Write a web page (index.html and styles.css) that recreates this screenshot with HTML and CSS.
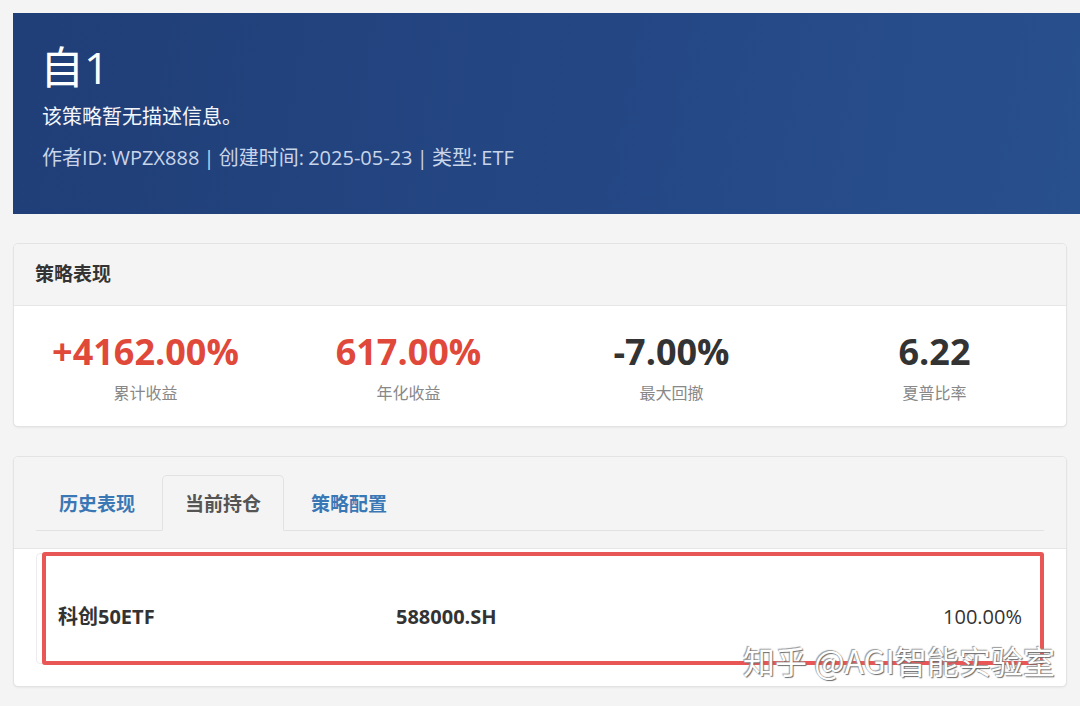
FILE: index.html
```html
<!DOCTYPE html>
<html lang="zh-CN">
<head>
<meta charset="utf-8">
<title>自1</title>
<link rel="stylesheet" href="styles.css">
</head>
<body>
<div class="page">
  <header class="hero">
    <h1 class="hero-title">自1</h1>
    <p class="hero-desc">该策略暂无描述信息。</p>
    <p class="hero-meta">作者ID: WPZX888 | 创建时间: 2025-05-23 | 类型: ETF</p>
  </header>

  <section class="card">
    <div class="card-header perf-header">
      <h2 class="card-title">策略表现</h2>
    </div>
    <div class="stats">
      <div class="stat">
        <div class="stat-value up">+4162.00%</div>
        <div class="stat-label">累计收益</div>
      </div>
      <div class="stat">
        <div class="stat-value up">617.00%</div>
        <div class="stat-label">年化收益</div>
      </div>
      <div class="stat">
        <div class="stat-value">-7.00%</div>
        <div class="stat-label">最大回撤</div>
      </div>
      <div class="stat">
        <div class="stat-value">6.22</div>
        <div class="stat-label">夏普比率</div>
      </div>
    </div>
  </section>

  <section class="card tabs-card">
    <div class="card-header tabs-header">
      <ul class="tabs">
        <li class="tab">历史表现</li>
        <li class="tab active">当前持仓</li>
        <li class="tab">策略配置</li>
      </ul>
    </div>
    <div class="tab-body">
      <div class="holdings">
        <div class="holding-row">
          <span class="h-name">科创50ETF</span>
          <span class="h-code">588000.SH</span>
          <span class="h-weight">100.00%</span>
        </div>
      </div>
      <div class="annotation"></div>
    </div>
    <div class="watermark"><span class="wm-logo"></span>知乎 @AGI智能实验室</div>
  </section>
</div>
</body>
</html>
```

FILE: styles.css
```css
* { box-sizing: border-box; }

html, body {
  margin: 0;
  padding: 0;
  background: #f4f4f4;
  font-family: "Open Sans", "Noto Sans CJK SC", sans-serif;
  color: #333;
  overflow: hidden;
}

.page {
  padding: 13px 13px 20px 13px;
}

.hero {
  margin-right: -13px;
  height: 201px;
  padding: 28px 29px 0 29px;
  background: linear-gradient(100deg, #203e77 0%, #244784 55%, #28508d 100%);
  color: #fff;
}

.hero-title {
  margin: 0;
  font-size: 44px;
  line-height: 52px;
  font-weight: 400;
  margin-left: -2px;
}

.hero-desc {
  margin: 10px 0 0 0;
  font-size: 20px;
  line-height: 28px;
  color: #f4f6fa;
}

.hero-meta {
  margin: 13px 0 0 0;
  font-size: 20px;
  line-height: 28px;
  color: #c9d5ea;
  word-spacing: -1px;
}

.card {
  position: relative;
  margin-top: 29px;
  background: #fff;
  border: 1px solid #e3e3e3;
  border-radius: 5px;
  box-shadow: 0 1px 2px rgba(0, 0, 0, 0.05);
  overflow: hidden;
}

.card-header {
  background: #f4f4f4;
  border-bottom: 1px solid #e6e6e6;
}

.perf-header {
  padding: 0 21px;
}

.card-title {
  margin: 0;
  font-size: 19px;
  line-height: 61px;
  font-weight: 700;
  color: #333;
}

.stats {
  display: grid;
  grid-template-columns: repeat(4, 1fr);
  padding: 23px 0 21px 0;
}

.stat {
  text-align: center;
}

.stat-value {
  font-size: 36px;
  line-height: 46px;
  font-weight: 700;
  color: #333;
}

.stat-value.up {
  color: #e0483a;
}

.stat-label {
  margin-top: 6px;
  font-size: 16px;
  line-height: 24px;
  color: #888;
}

.tabs-card {
  margin-top: 29px;
}

.tabs-header {
  padding: 18px 22px 17px 22px;
}

.tabs {
  display: flex;
  margin: 0;
  padding: 0;
  list-style: none;
  border-bottom: 1px solid #e2e2e2;
  height: 56px;
}

.tab {
  margin-right: 4px;
  margin-bottom: -1px;
  padding: 0 22px;
  font-size: 19px;
  line-height: 56px;
  font-weight: 700;
  color: #3a78b5;
  border: 1px solid transparent;
  border-radius: 5px 5px 0 0;
}

.tab.active {
  color: #555;
  background: #f4f4f4;
  border-color: #e2e2e2;
  border-bottom-color: #f4f4f4;
}

.tab-body {
  position: relative;
  padding: 4px 22px 22px 22px;
}

.holdings {
  border: 1px solid #ececec;
  border-radius: 4px;
}

.holding-row {
  display: grid;
  grid-template-columns: 338px 1fr auto;
  align-items: center;
  padding: 51px 21px 34px 21px;
  font-size: 20px;
  line-height: 24px;
}

.h-name, .h-code {
  font-weight: 700;
  color: #333;
}

.h-weight {
  color: #333;
  font-weight: 400;
}

.annotation {
  position: absolute;
  left: 28px;
  top: 3px;
  width: 1002px;
  height: 113px;
  border: 4px solid #e85656;
  border-radius: 3px;
  pointer-events: none;
}

.watermark {
  position: absolute;
  left: 729px;
  top: 183px;
  font-family: "Noto Sans CJK SC", sans-serif;
  font-size: 32px;
  line-height: 40px;
  color: #fff;
  white-space: nowrap;
  text-shadow: 1px 1px 1px #6b6b6b, -1px -1px 1px #9a9a9a;
}

.wm-logo {
  position: absolute;
  left: 60px;
  top: 8px;
  width: 26px;
  height: 30px;
  border-radius: 50%;
  background: radial-gradient(circle at 40% 40%, #bdbdbd, #8c8c8c);
  opacity: 0.75;
  z-index: -1;
}
```
